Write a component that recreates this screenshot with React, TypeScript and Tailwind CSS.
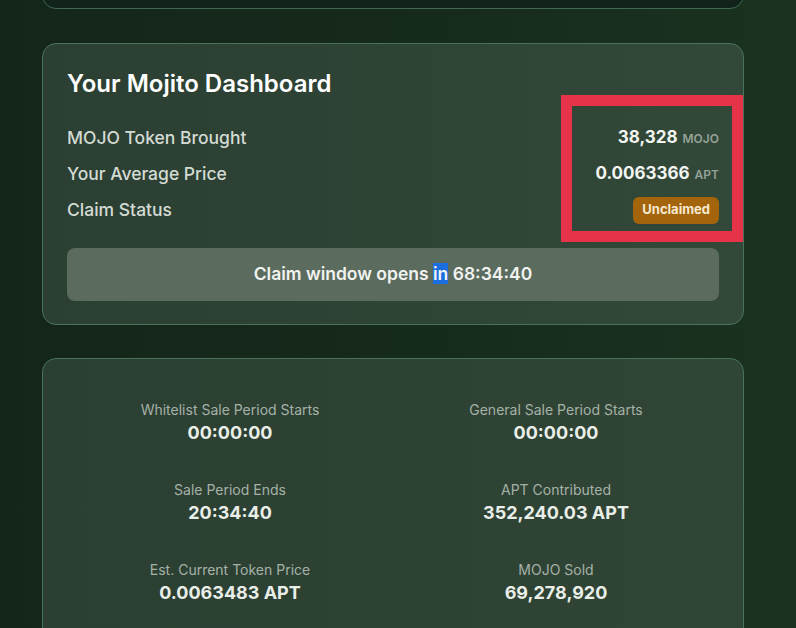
import React from "react";

const font = { fontFamily: "Inter, 'Noto Sans', sans-serif" };

function Row({ label, children }: { label: string; children: React.ReactNode }) {
  return (
    <div className="flex h-[36px] items-center justify-between">
      <span className="text-[17.5px] font-medium text-[#d3dbd4]">{label}</span>
      <div className="flex items-center">{children}</div>
    </div>
  );
}

function Stat({ label, value }: { label: string; value: string }) {
  return (
    <div className="flex flex-col items-center">
      <span className="text-[14px] leading-[20px] text-[#a6b1a8]">{label}</span>
      <span className="text-[18px] font-bold leading-[26px] text-[#e9eee9]">{value}</span>
    </div>
  );
}

export default function App() {
  return (
    <div
      className="h-[628px] w-[796px] overflow-hidden bg-gradient-to-r from-[#14261a] via-[#162a1c] to-[#1b3220]"
      style={font}
    >
      <div className="ml-[42px] w-[702px]">
        <div className="mt-[-40px] h-[49px] rounded-[14px] border border-[#3f6a4f] bg-[#11231a]" />

        <div className="relative mt-[34px] rounded-[14px] border border-[#477459] bg-gradient-to-r from-[#2b3f32] to-[#324838] px-[24px] pb-[23px] pt-[24px]">
          <h2 className="text-[24px] font-semibold leading-[32px] text-white">Your Mojito Dashboard</h2>
          <div className="mt-[20px] flex flex-col">
            <Row label="MOJO Token Brought">
              <span className="text-[17px] font-bold text-[#f3f5f2]">38,328</span>
              <span className="ml-[5px] mt-[2px] text-[12px] font-semibold text-[#95a298]">MOJO</span>
            </Row>
            <Row label="Your Average Price">
              <span className="text-[17px] font-bold text-[#f3f5f2]">0.0063366</span>
              <span className="ml-[5px] mt-[2px] text-[12px] font-semibold text-[#95a298]">APT</span>
            </Row>
            <Row label="Claim Status">
              <span className="flex h-[27px] items-center rounded-[6px] bg-[#a3640b] px-[9px] text-[13px] font-bold text-[#f6e9cf]">
                Unclaimed
              </span>
            </Row>
          </div>
          <div className="mt-[20px] flex h-[53px] items-center justify-center rounded-[8px] bg-[#5b6b5e] text-[17.5px] font-semibold text-[#f1f3f0]">
            <span>
              Claim window opens <span className="bg-[#1b6ee0]">in</span> 68:34:40
            </span>
          </div>

          <div className="absolute left-[518px] top-[51px] h-[147px] w-[182px] border-[11px] border-[#e6334a]" />
        </div>

        <div className="mt-[33px] rounded-[14px] border border-[#477459] bg-gradient-to-r from-[#2b3f32] to-[#304535] px-[24px] pb-[40px] pt-[41px]">
          <div className="grid grid-cols-2 gap-y-[34px]">
            <Stat label="Whitelist Sale Period Starts" value="00:00:00" />
            <Stat label="General Sale Period Starts" value="00:00:00" />
            <Stat label="Sale Period Ends" value="20:34:40" />
            <Stat label="APT Contributed" value="352,240.03 APT" />
            <Stat label="Est. Current Token Price" value="0.0063483 APT" />
            <Stat label="MOJO Sold" value="69,278,920" />
          </div>
        </div>
      </div>
    </div>
  );
}
